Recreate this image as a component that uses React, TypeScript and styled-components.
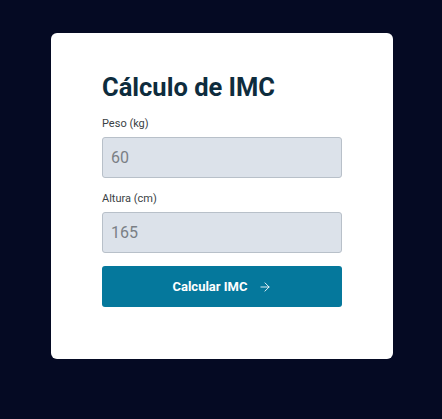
import React, { useState } from 'react';
import styled, { createGlobalStyle } from 'styled-components';
import { ArrowRight } from 'lucide-react';

const GlobalStyle = createGlobalStyle`
	html, body {
		margin: 0;
		padding: 0;
		background: #050a23;
		font-family: Roboto, "Liberation Sans", sans-serif;
	}
`;

const Page = styled.div`
	min-height: 419px;
	display: flex;
	justify-content: center;
	align-items: flex-start;
	padding: 33px 0 0 2px;
	box-sizing: border-box;
`;

const Card = styled.form`
	width: 342px;
	box-sizing: border-box;
	padding: 39px 51px 52px;
	background: #ffffff;
	border-radius: 6px;
	display: flex;
	flex-direction: column;
`;

const Title = styled.h1`
	margin: 0 0 15px;
	font-size: 25.5px;
	line-height: 30px;
	font-weight: 700;
	color: #0e2c3d;
`;

const Field = styled.div`
	display: flex;
	flex-direction: column;
	gap: 7px;
	margin-bottom: ${props => props.$last ? 13 : 14}px;
`;

const Label = styled.label`
	font-size: 11px;
	line-height: 13px;
	color: #3a3f45;
`;

const Input = styled.input`
	height: 41px;
	box-sizing: border-box;
	padding: 0 8px;
	background: #dce2ea;
	border: 1px solid #b8c0c9;
	border-radius: 3px;
	font-family: inherit;
	font-size: 16px;
	color: #7a7f85;
	outline: none;
`;

const Button = styled.button`
	height: 41px;
	border: none;
	border-radius: 3px;
	background: #05789c;
	color: #ffffff;
	font-family: inherit;
	font-size: 13px;
	font-weight: 700;
	display: flex;
	align-items: center;
	justify-content: center;
	gap: 10px;
	cursor: pointer;
`;

const App = () => {
	const [peso, setPeso] = useState('60');
	const [altura, setAltura] = useState('165');

	return (
		<>
			<GlobalStyle />
			<Page>
				<Card onSubmit={(e) => e.preventDefault()}>
					<Title>Cálculo de IMC</Title>
					<Field>
						<Label htmlFor="peso">Peso (kg)</Label>
						<Input id="peso" value={peso} onChange={(e) => setPeso(e.target.value)} />
					</Field>
					<Field $last>
						<Label htmlFor="altura">Altura (cm)</Label>
						<Input id="altura" value={altura} onChange={(e) => setAltura(e.target.value)} />
					</Field>
					<Button type="submit">
						Calcular IMC
						<ArrowRight size={14} strokeWidth={1.5} />
					</Button>
				</Card>
			</Page>
		</>
	)
}

export default App;
